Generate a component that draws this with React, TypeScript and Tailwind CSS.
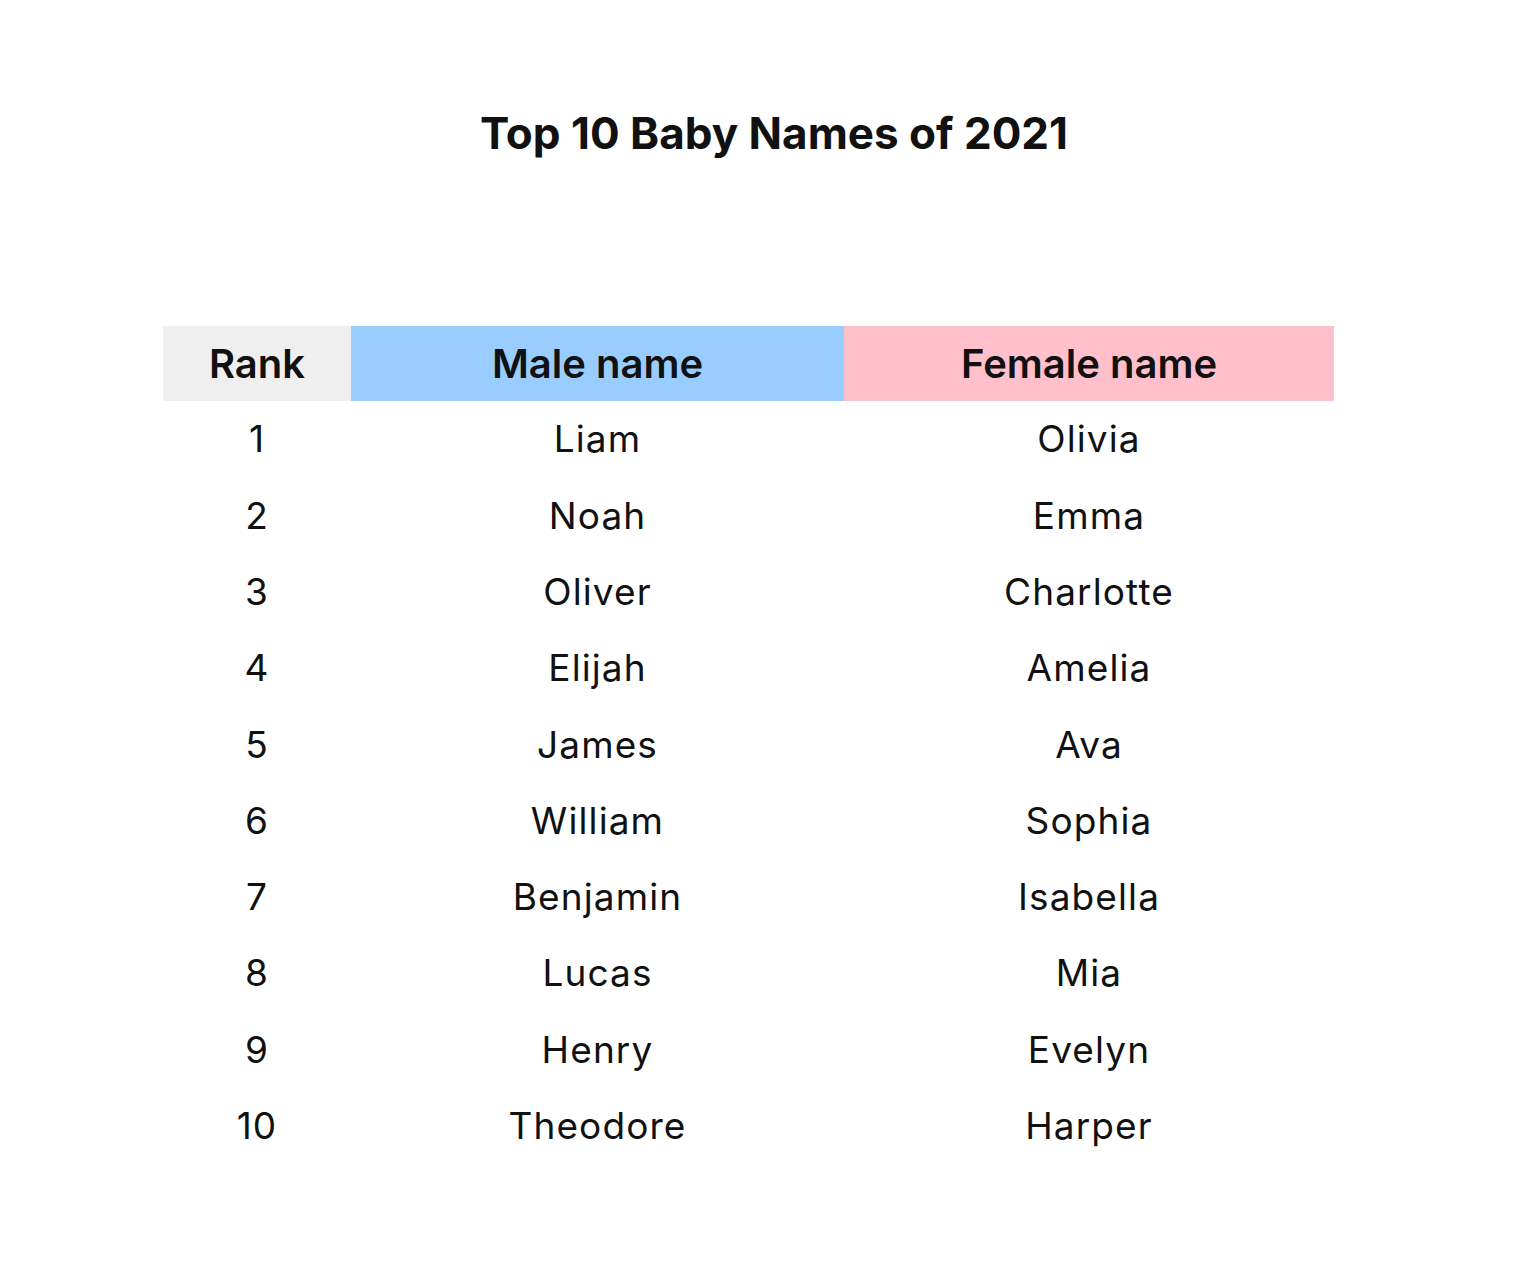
const rows = [
  ["1", "Liam", "Olivia"],
  ["2", "Noah", "Emma"],
  ["3", "Oliver", "Charlotte"],
  ["4", "Elijah", "Amelia"],
  ["5", "James", "Ava"],
  ["6", "William", "Sophia"],
  ["7", "Benjamin", "Isabella"],
  ["8", "Lucas", "Mia"],
  ["9", "Henry", "Evelyn"],
  ["10", "Theodore", "Harper"],
];

export default function App() {
  return (
    <div className="min-h-[1266px] w-[1520px] bg-white text-[#111] font-['Inter','Noto_Sans',sans-serif]">
      <h1 className="pt-[108px] text-center text-[44px] font-bold leading-[50px] pl-[28px]">
        Top 10 Baby Names of 2021
      </h1>
      <table className="ml-[163px] mt-[168px] border-collapse">
        <thead>
          <tr className="h-[75px] text-[40px]">
            <th className="w-[188px] bg-[#efefef] font-semibold">Rank</th>
            <th className="w-[493px] bg-[#99ccff] font-semibold">Male name</th>
            <th className="w-[490px] bg-[#ffc0cb] font-semibold">Female name</th>
          </tr>
        </thead>
        <tbody>
          {rows.map(([rank, male, female]) => (
            <tr key={rank} className="h-[76.3px] text-[37px] tracking-[0.03em] text-center">
              <td>{rank}</td>
              <td>{male}</td>
              <td>{female}</td>
            </tr>
          ))}
        </tbody>
      </table>
    </div>
  );
}
